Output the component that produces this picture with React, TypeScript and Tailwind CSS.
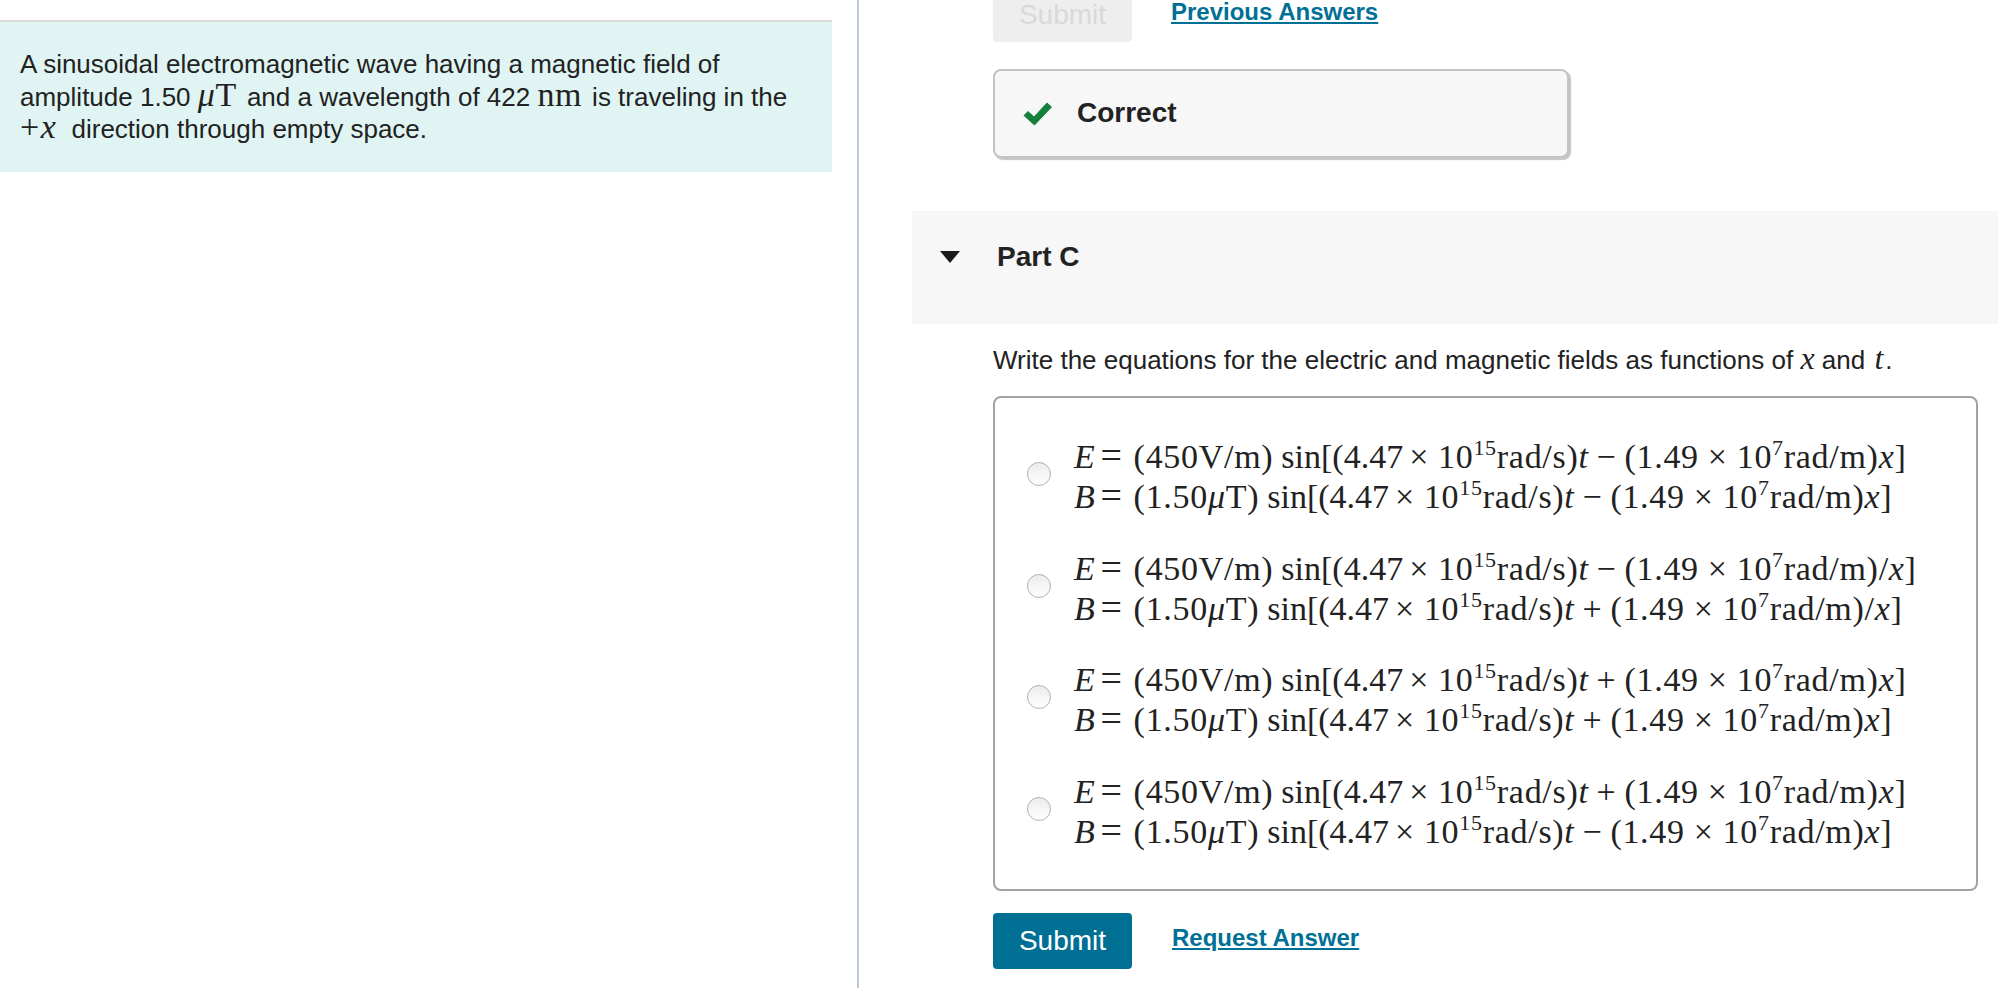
import React from "react";

const I = ({ children }: { children: React.ReactNode }) => <span className="italic">{children}</span>;

function Formula({ v, amp, sign, slash }: { v: string; amp: React.ReactNode; sign: string; slash: boolean }) {
  return (
    <div className="h-[40px] leading-[40px] whitespace-nowrap">
      <I>{v}</I>
      <span className="ml-[5px] mr-[11px] text-[38px] leading-[30px]">=</span>
      <span>{amp}</span>
      <span className="ml-[8px] tracking-[0px]">sin[(4.47</span>
      <span className="ml-[6px] mr-[9px]">×</span>
      <span>10</span>
      <sup className="relative -top-[13px] align-baseline text-[22px] leading-none">15</sup>
      <span>rad/s)</span>
      <I>t</I>
      <span className="mx-[8px]">{sign}</span>
      <span>(1.49</span>
      <span className="mx-[9px]">×</span>
      <span>10</span>
      <sup className="relative -top-[13px] align-baseline text-[22px] leading-none">7</sup>
      <span>rad/m)</span>
      {slash ? <span>/</span> : null}
      <I>x</I>
      <span>]</span>
    </div>
  );
}

function Option({ s1, s2, slash }: { s1: string; s2: string; slash: boolean }) {
  return (
    <div className="flex h-[111.5px] items-start">
      <div className="mt-[31px] ml-[32px] h-[24px] w-[24px] shrink-0 rounded-full border border-[#b0b0b0] bg-gradient-to-b from-[#ececec] to-white" />
      <div className="ml-[23px] mt-[6px] font-['Liberation_Serif',serif] text-[34px] tracking-[0.7px] text-[#222]">
        <Formula v="E" amp="(450V/m)" sign={s1} slash={slash} />
        <Formula v="B" amp={<>(1.50<I>μ</I>T)</>} sign={s2} slash={slash} />
      </div>
    </div>
  );
}

export default function App() {
  return (
    <div className="flex h-[988px] w-full overflow-hidden bg-white font-['Liberation_Sans',Arial,sans-serif] text-[26px] text-[#222]">
      <div className="w-[859px] shrink-0 border-r-2 border-[#b9c9dd] pt-[20px]">
        <div className="h-[152px] w-[832px] border-t-2 border-[#dcdcdc] bg-[#e0f5f3] pl-[20px] pt-[26px] leading-[32.5px]">
          <div className="h-[32.5px]">A sinusoidal electromagnetic wave having a magnetic field of</div>
          <div className="h-[32.5px] whitespace-nowrap">
            amplitude 1.50 <span className="font-['Liberation_Serif',serif] text-[34px] leading-[20px] tracking-[0.5px]"><I>μ</I>T</span><span className="ml-[3px]"> and a wavelength of 422 </span><span className="font-['Liberation_Serif',serif] text-[34px] leading-[20px] tracking-[0.5px]">nm</span><span className="ml-[3px]"> is traveling in the</span>
          </div>
          <div className="h-[32.5px]">
            <span className="font-['Liberation_Serif',serif] text-[34px] leading-[20px] tracking-[1.5px]">+<I>x</I></span><span className="ml-[7px]"> direction through empty space.</span>
          </div>
        </div>
      </div>

      <div className="min-w-0 flex-1 pl-[53px]">
        <div className="pl-[81px]">
          <div className="flex items-start">
            <div className="flex h-[42px] w-[139px] items-end justify-center rounded-b-[4px] bg-[#eeeeee] pb-[15px] text-[28px] leading-[24px] text-[#d9d9d9]">Submit</div>
            <a className="ml-[39px] mt-[2px] text-[24px] font-bold leading-[20px] text-[#007096] underline">Previous Answers</a>
          </div>
          <div className="mt-[27px] flex h-[89px] w-[576px] items-center rounded-[8px] border-2 border-[#c4c4c4] bg-[#f7f7f7] pl-[28px] shadow-[2px_2px_1px_#c4c4c4]">
            <svg width="30" height="24" viewBox="0 0 30 24" className="shrink-0">
              <path d="M1 13.5 L5 9.5 L11 15 L24 1 L28.5 5 L11.5 23 Z" fill="#14803c" stroke="#14803c" strokeWidth="1" strokeLinejoin="round" />
            </svg>
            <span className="ml-[24px] -mt-[2px] text-[28px] font-bold">Correct</span>
          </div>
        </div>

        <div className="mt-[53px] flex h-[113px] items-start bg-[#f7f7f7] pl-[28px] pt-[31px]">
          <svg width="20" height="12" viewBox="0 0 20 12" className="mt-[9px] shrink-0">
            <path d="M0 0 H20 L10 12 Z" fill="#1a1a1a" />
          </svg>
          <span className="ml-[37px] text-[28px] font-bold leading-[30px]">Part C</span>
        </div>

        <div className="pl-[81px]">
          <div className="mt-[21px] h-[30px] leading-[30px]">
            Write the equations for the electric and magnetic fields as functions of{" "}
            <span className="font-['Liberation_Serif',serif] text-[32px] leading-[20px]"><I>x</I></span> and{" "}
            <span className="ml-[2px] font-['Liberation_Serif',serif] text-[32px] leading-[20px]"><I>t</I></span><span className="ml-[2px]">.</span>
          </div>
          <div className="mt-[21px] h-[495px] w-[985px] rounded-[8px] border-2 border-[#a3a3a3] pt-[33px]">
            <Option s1="−" s2="−" slash={false} />
            <Option s1="−" s2="+" slash={true} />
            <Option s1="+" s2="+" slash={false} />
            <Option s1="+" s2="−" slash={false} />
          </div>
          <div className="mt-[22px] flex items-start">
            <div className="flex h-[56px] w-[139px] items-center justify-center rounded-[4px] bg-[#006f94] text-[28px] text-white">Submit</div>
            <a className="ml-[40px] mt-[13px] text-[24px] font-bold leading-[24px] text-[#007096] underline">Request Answer</a>
          </div>
        </div>
      </div>
    </div>
  );
}
